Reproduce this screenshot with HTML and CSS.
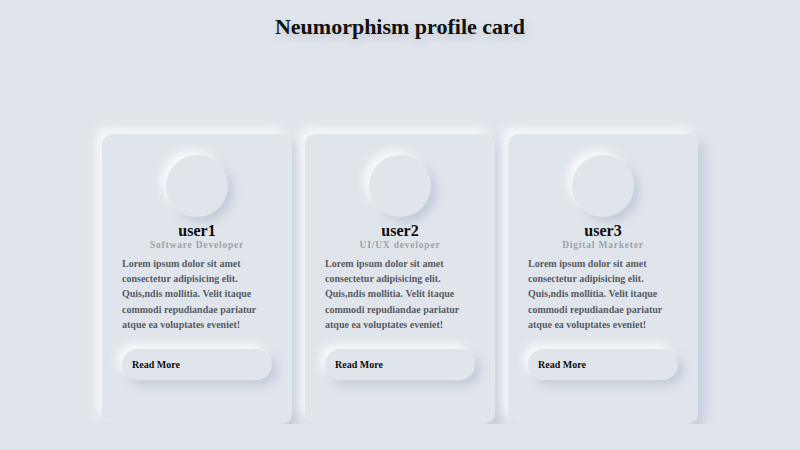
FILE: index.html
```html
<!DOCTYPE html>
<html>
<head>
<meta charset="utf-8">
<link rel="stylesheet" href="styles.css">
</head>
<body>
<h1 class="title">Neumorphism profile card</h1>
<div class="cards">
  <div class="card">
    <div class="avatar"></div>
    <div class="name">user1</div>
    <div class="role">Software Developer</div>
    <p class="text">Lorem ipsum dolor sit amet consectetur adipisicing elit. Quis,ndis mollitia. Velit itaque commodi repudiandae pariatur atque ea voluptates eveniet!</p>
    <button class="btn">Read More</button>
  </div>
  <div class="card">
    <div class="avatar"></div>
    <div class="name">user2</div>
    <div class="role">UI/UX developer</div>
    <p class="text">Lorem ipsum dolor sit amet consectetur adipisicing elit. Quis,ndis mollitia. Velit itaque commodi repudiandae pariatur atque ea voluptates eveniet!</p>
    <button class="btn">Read More</button>
  </div>
  <div class="card">
    <div class="avatar"></div>
    <div class="name">user3</div>
    <div class="role">Digital Marketer</div>
    <p class="text">Lorem ipsum dolor sit amet consectetur adipisicing elit. Quis,ndis mollitia. Velit itaque commodi repudiandae pariatur atque ea voluptates eveniet!</p>
    <button class="btn">Read More</button>
  </div>
</div>
</body>
</html>
```
FILE: styles.css
```css
html, body {
  margin: 0;
  padding: 0;
  background: #e0e5ec;
  font-family: "Liberation Serif", "Times New Roman", serif;
}
.title {
  margin: 14px 0 0;
  font-size: 22px;
  line-height: 25px;
  font-weight: bold;
  text-align: center;
  color: #111;
  text-shadow: 2px 4px 8px rgba(60, 70, 90, 0.18);
}
.cards {
  display: flex;
  justify-content: center;
  gap: 13px;
  margin-top: 95px;
}
.card {
  box-sizing: border-box;
  width: 190px;
  height: 290px;
  padding: 20px;
  border-radius: 10px;
  background: #e0e5ec;
  box-shadow: -6px -6px 12px rgba(255, 255, 255, 0.8), 6px 6px 12px rgba(163, 177, 198, 0.5);
  display: flex;
  flex-direction: column;
  align-items: center;
}
.avatar {
  width: 62px;
  height: 62px;
  border-radius: 50%;
  background: #e0e5ec;
  box-shadow: -5px -5px 10px rgba(255, 255, 255, 0.8), 5px 5px 10px rgba(163, 177, 198, 0.5);
  flex: none;
  margin-top: 1px;
}
.name {
  margin-top: 5px;
  font-size: 16px;
  line-height: 18px;
  font-weight: bold;
  color: #0d0d0d;
}
.role {
  margin-top: -1px;
  font-size: 9.5px;
  line-height: 12px;
  font-weight: bold;
  letter-spacing: 0.8px;
  color: #9ea2a9;
}
.text {
  align-self: stretch;
  margin: 5px 0 0;
  font-size: 10px;
  line-height: 15.2px;
  font-weight: bold;
  color: #575c64;
}
.btn {
  align-self: flex-start;
  margin-top: 17px;
  width: 150px;
  height: 31px;
  border: none;
  border-radius: 16px;
  background: #e0e5ec;
  box-shadow: -5px -5px 10px rgba(255, 255, 255, 0.8), 5px 5px 10px rgba(163, 177, 198, 0.5);
  font-family: "Liberation Serif", "Times New Roman", serif;
  font-size: 10px;
  font-weight: bold;
  color: #0d0d0d;
  text-align: left;
  padding: 0 0 0 10px;
}
```
